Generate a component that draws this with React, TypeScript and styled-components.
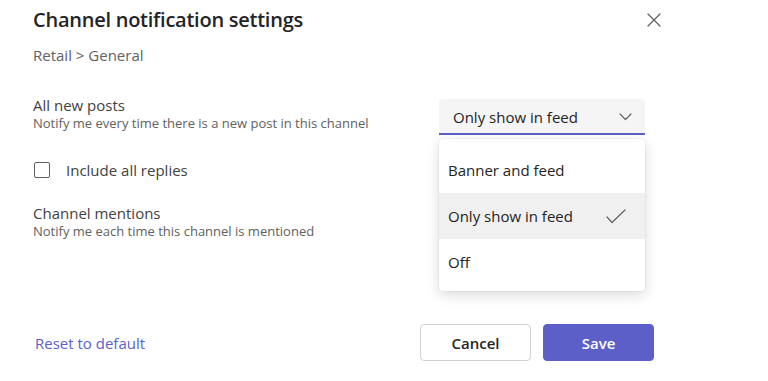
import React, { FC } from 'react';
import styled, { createGlobalStyle } from 'styled-components';

const GlobalStyle = createGlobalStyle`
    html, body {
        margin: 0;
        padding: 0;
        background: #ffffff;
        font-family: "Open Sans", "Noto Sans", sans-serif;
        color: #242424;
    }
`;

type Option = { label: string; selected?: boolean };

const options: Option[] = [
    { label: 'Banner and feed' },
    { label: 'Only show in feed', selected: true },
    { label: 'Off' },
];

const CloseIcon: FC = () => (
    <svg width="14" height="14" viewBox="0 0 14 14" fill="none">
        <path d="M1 1L13 13M13 1L1 13" stroke="#616161" strokeWidth="1.3" strokeLinecap="round" />
    </svg>
);

const ChevronIcon: FC = () => (
    <svg width="13" height="8" viewBox="0 0 13 8" fill="none">
        <path d="M1 1L6.5 6.5L12 1" stroke="#616161" strokeWidth="1.2" strokeLinecap="round" strokeLinejoin="round" />
    </svg>
);

const CheckIcon: FC = () => (
    <svg width="20" height="15" viewBox="0 0 20 15" fill="none">
        <path d="M1 8L6 13.5L19 1" stroke="#616161" strokeWidth="1.2" strokeLinecap="round" strokeLinejoin="round" />
    </svg>
);

const App: FC = () => {
    return (
        <>
            <GlobalStyle />
            <DialogStyled>
                <HeaderStyled>
                    <TitleStyled>Channel notification settings</TitleStyled>
                    <CloseButtonStyled aria-label="Close">
                        <CloseIcon />
                    </CloseButtonStyled>
                </HeaderStyled>

                <BreadcrumbStyled>Retail &gt; General</BreadcrumbStyled>

                <SettingRowStyled>
                    <div>
                        <LabelStyled>All new posts</LabelStyled>
                        <HintStyled>Notify me every time there is a new post in this channel</HintStyled>
                    </div>

                    <SelectWrapStyled>
                        <SelectStyled>
                            <span>Only show in feed</span>
                            <ChevronIcon />
                        </SelectStyled>

                        <MenuStyled>
                            {options.map((o) => (
                                <MenuItemStyled key={o.label} $selected={o.selected}>
                                    <span>{o.label}</span>
                                    {o.selected && <CheckIcon />}
                                </MenuItemStyled>
                            ))}
                        </MenuStyled>
                    </SelectWrapStyled>
                </SettingRowStyled>

                <CheckRowStyled>
                    <CheckboxStyled />
                    <CheckLabelStyled>Include all replies</CheckLabelStyled>
                </CheckRowStyled>

                <MentionsStyled>
                    <LabelStyled>Channel mentions</LabelStyled>
                    <HintStyled>Notify me each time this channel is mentioned</HintStyled>
                </MentionsStyled>

                <FooterStyled>
                    <LinkStyled>Reset to default</LinkStyled>
                    <ButtonsStyled>
                        <ButtonStyled>Cancel</ButtonStyled>
                        <ButtonStyled $primary>Save</ButtonStyled>
                    </ButtonsStyled>
                </FooterStyled>
            </DialogStyled>
        </>
    );
};

export default App;

const DialogStyled = styled.div`
    width: 628px;
    padding: 6px 0 0 33px;
`;

const HeaderStyled = styled.div`
    display: flex;
    align-items: center;
    justify-content: space-between;
    height: 28px;
`;

const TitleStyled = styled.h1`
    margin: 0;
    font-size: 20px;
    line-height: 28px;
    font-weight: 600;
    color: #242424;
    letter-spacing: -0.25px;
`;

const CloseButtonStyled = styled.button`
    display: flex;
    align-items: center;
    justify-content: center;
    width: 20px;
    height: 20px;
    margin-right: -3px;
    margin-top: -1px;
    padding: 0;
    border: none;
    background: none;
`;

const BreadcrumbStyled = styled.div`
    margin-top: 11px;
    font-size: 15px;
    line-height: 20px;
    color: #616161;
`;

const SettingRowStyled = styled.div`
    display: flex;
    justify-content: space-between;
    align-items: flex-start;
    margin-top: 30px;
    padding-right: 16px;
`;

const LabelStyled = styled.div`
    font-size: 15px;
    line-height: 20px;
    color: #424242;
`;

const HintStyled = styled.div`
    font-size: 13px;
    line-height: 16px;
    color: #616161;
`;

const SelectWrapStyled = styled.div`
    position: relative;
    margin-top: 4px;
`;

const SelectStyled = styled.div`
    display: flex;
    align-items: center;
    justify-content: space-between;
    box-sizing: border-box;
    width: 206px;
    height: 36px;
    padding: 1px 13px 0 14px;
    background: #f5f5f5;
    border-radius: 4px 4px 0 0;
    border-bottom: 2px solid #5b5fc7;
    font-size: 15px;
    color: #242424;
`;

const MenuStyled = styled.div`
    position: absolute;
    top: 40px;
    left: 0;
    width: 206px;
    padding: 8px 0 6px;
    background: #ffffff;
    border-radius: 4px;
    box-shadow: 0 4px 14px rgba(0, 0, 0, 0.14), 0 0 2px rgba(0, 0, 0, 0.12);
    z-index: 2;
`;

const MenuItemStyled = styled.div<{ $selected?: boolean }>`
    display: flex;
    align-items: center;
    justify-content: space-between;
    height: 46px;
    padding: 0 19px 0 9px;
    font-size: 15px;
    color: #242424;
    background: ${(p) => (p.$selected ? '#f0f0f0' : 'transparent')};
`;

const CheckRowStyled = styled.div`
    display: flex;
    align-items: center;
    gap: 16px;
    margin-top: 25px;
    padding-left: 1px;
`;

const CheckboxStyled = styled.span`
    box-sizing: border-box;
    width: 16px;
    height: 16px;
    border: 1px solid #616161;
    border-radius: 2px;
`;

const CheckLabelStyled = styled.span`
    font-size: 15px;
    line-height: 20px;
    color: #424242;
`;

const MentionsStyled = styled.div`
    margin-top: 23px;
`;

const FooterStyled = styled.div`
    display: flex;
    align-items: center;
    justify-content: space-between;
    margin-top: 85px;
    padding-right: 7px;
`;

const LinkStyled = styled.span`
    padding-left: 2px;
    font-size: 15px;
    color: #5b5fc7;
`;

const ButtonsStyled = styled.div`
    display: flex;
    gap: 12px;
`;

const ButtonStyled = styled.button<{ $primary?: boolean }>`
    box-sizing: border-box;
    width: 111px;
    height: 37px;
    border-radius: 4px;
    font-family: inherit;
    font-size: 15px;
    font-weight: 600;
    border: 1px solid ${(p) => (p.$primary ? '#5b5fc7' : '#d1d1d1')};
    background: ${(p) => (p.$primary ? '#5b5fc7' : '#ffffff')};
    color: ${(p) => (p.$primary ? '#ffffff' : '#242424')};
`;
